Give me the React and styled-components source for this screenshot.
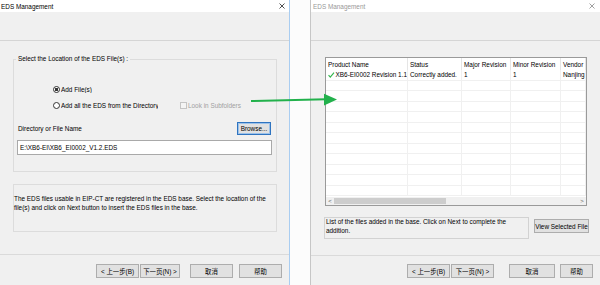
import React from 'react'
import styled, { createGlobalStyle } from 'styled-components'

const GlobalStyle = createGlobalStyle`
  html, body {
    margin: 0;
    padding: 0;
  }
  body {
    width: 600px;
    height: 285px;
    overflow: hidden;
    background: #fff;
    font-family: "Liberation Sans", "Noto Sans CJK SC", Arial, sans-serif;
    font-size: 6.4px;
    color: #000;
  }
`

const Screen = styled.div`
  position: relative;
  display: flex;
  width: 600px;
  height: 285px;
  overflow: hidden;
`

const Window = styled.div`
  display: flex;
  flex-direction: column;
  height: 100%;
  box-sizing: border-box;
  background: #f0f0f0;
  ${props => (props.side === 'left'
    ? 'width: 290px; border-right: 1px solid #a9cdf1;'
    : 'flex: 1; border-left: 1px solid #c6c6c6;')}
`

const Desktop = styled.div`
  width: 20px;
  background: #fcfcfc;
`

const TitleBar = styled.div`
  flex-shrink: 0;
  height: 12px;
  display: flex;
  align-items: center;
  justify-content: space-between;
  padding: 0 ${props => props.pr}px 0 ${props => props.pl}px;
  background: #fff;
  color: ${props => (props.inactive ? '#999' : '#000')};
`

const Header = styled.div`
  flex-shrink: 0;
  height: 29px;
  box-sizing: border-box;
  border-bottom: 1px solid #d5d5d5;
`

const Body = styled.div`
  flex: 1;
  display: flex;
  flex-direction: column;
`

const GroupBox = styled.fieldset`
  margin: 14px 0 0 13px;
  padding: 0;
  width: 264px;
  height: 117px;
  min-width: 0;
  box-sizing: border-box;
  border: 1px solid #dcdcdc;
`

const Legend = styled.legend`
  margin-left: 2px;
  padding: 0 2px;
  line-height: 8px;
`

const Options = styled.div`
  margin-top: 21px;
  padding-left: 39px;
  display: flex;
  flex-direction: column;
  gap: 6px;
`

const OptionRow = styled.div`
  display: flex;
  align-items: center;
  height: 10px;
`

const Radio = styled.span`
  width: 7px;
  height: 7px;
  box-sizing: border-box;
  border-radius: 50%;
  border: 1px solid #333;
  margin-right: 1px;
  background: ${props => (props.checked
    ? 'radial-gradient(circle, #333 0 1.4px, #fff 1.9px)'
    : '#fff')};
`

const OptionLabel = styled.span`
  white-space: nowrap;
  overflow: hidden;
  width: ${props => (props.w ? `${props.w}px` : 'auto')};
`

const Check = styled.span`
  width: 7px;
  height: 7px;
  box-sizing: border-box;
  border: 1px solid #c4c4c4;
  background: #f4f4f4;
  margin: 0 1px 0 22px;
`

const Disabled = styled.span`
  color: #a0a0a0;
  white-space: nowrap;
`

const FileRow = styled.div`
  margin-top: 12px;
  height: 13px;
  display: flex;
  align-items: center;
  justify-content: space-between;
  padding: 0 5px 0 4px;
`

const Button = styled.div`
  width: ${props => props.w}px;
  height: ${props => props.h || 14}px;
  margin-left: ${props => props.ml || 0}px;
  box-sizing: border-box;
  display: flex;
  align-items: center;
  justify-content: center;
  white-space: nowrap;
  background: #e1e1e1;
  border: 1px solid ${props => (props.focused ? '#2f74c0' : '#adadad')};
  box-shadow: ${props => (props.focused ? 'inset 0 0 0 1px #9cc2ea' : 'none')};
`

const SideButton = styled(Button)`
  margin-top: 2px;
`

const TextBox = styled.div`
  margin: 5px 0 0 3px;
  width: 255px;
  height: 15px;
  box-sizing: border-box;
  padding-left: 2px;
  display: flex;
  align-items: center;
  background: #fff;
  border: 1px solid #a9a9a9;
`

const Note = styled.div`
  margin: 12px 0 0 13px;
  width: 264px;
  height: 48px;
  box-sizing: border-box;
  padding: 9px 6px 0 0;
  line-height: 9px;
  border: 1px solid #dcdcdc;
`

const Footer = styled.div`
  margin-top: auto;
  height: ${props => props.h}px;
  box-sizing: border-box;
  border-top: 1px solid #dadada;
  display: flex;
  justify-content: flex-end;
  align-items: flex-start;
  padding: ${props => props.h - 22}px 7px 0 0;
`

const Table = styled.div`
  margin: 16px 0 0 14px;
  width: 262px;
  height: 149px;
  box-sizing: border-box;
  border: 1px solid #9a9a9a;
  background: #fff;
  display: flex;
  flex-direction: column;
  overflow: hidden;
`

const Row = styled.div`
  display: grid;
  grid-template-columns: 82px 54px 49px 50px 1fr;
  height: ${props => (props.head ? 12 : 10.5)}px;
  box-sizing: border-box;
  border-bottom: ${props => (props.head ? 'none' : '1px solid #f0f0f0')};
  flex-shrink: 0;
`

const Cell = styled.div`
  display: flex;
  align-items: center;
  gap: 1px;
  padding-left: 2px;
  white-space: nowrap;
  overflow: hidden;
  border-right: 1px solid ${props => (props.head ? '#e5e5e5' : '#f0f0f0')};
`

const Rows = styled.div`
  flex: 1;
  overflow: hidden;
`

const ScrollBar = styled.div`
  flex-shrink: 0;
  height: 8px;
  display: flex;
  align-items: center;
  background: #f0f0f0;
  color: #606060;
  font-size: 6px;
`

const ScrollArrow = styled.span`
  width: 8px;
  text-align: center;
  line-height: 8px;
`

const Thumb = styled.span`
  width: 112px;
  height: 6px;
  background: #cdcdcd;
`

const Track = styled.span`
  flex: 1;
`

const BottomRow = styled.div`
  margin: 11px 0 0 13px;
  display: flex;
  align-items: flex-start;
`

const InfoBox = styled.div`
  width: 205px;
  height: 22px;
  box-sizing: border-box;
  padding: 0 10px 0 1px;
  line-height: 8.5px;
  border: 1px solid #d2d2d2;
`

const Arrow = styled.svg`
  position: absolute;
  left: 0;
  top: 0;
  pointer-events: none;
`

const CloseIcon = ({ color }) => (
  <svg width="6" height="6" viewBox="0 0 6 6">
    <path d="M0.5 0.5 L5.5 5.5 M5.5 0.5 L0.5 5.5" stroke={color} strokeWidth="0.8" fill="none" />
  </svg>
)

const CheckIcon = () => (
  <svg width="7" height="6" viewBox="0 0 7 6">
    <path d="M0.6 3.2 L2.4 5.2 L6.4 0.6" stroke="#2fb54a" strokeWidth="1.2" fill="none" />
  </svg>
)

const columns = ['Product Name', 'Status', 'Major Revision', 'Minor Revision', 'Vendor']
const emptyRows = Array.from({ length: 11 })

const WizardButtons = ({ widths, gaps }) => (
  <>
    <Button w={widths[0]}>{'< 上一步(B)'}</Button>
    <Button w={widths[1]} ml={gaps[0]}>{'下一页(N) >'}</Button>
    <Button w={widths[2]} ml={gaps[1]}>取消</Button>
    <Button w={widths[3]} ml={gaps[2]}>帮助</Button>
  </>
)

export default function App () {
  return (
    <Screen>
      <GlobalStyle />

      <Window side="left">
        <TitleBar pl={1} pr={4}>
          <span>EDS Management</span>
          <CloseIcon color="#222" />
        </TitleBar>
        <Header />
        <Body>
          <GroupBox>
            <Legend>Select the Location of the EDS File(s) :</Legend>
            <Options>
              <OptionRow>
                <Radio checked />
                <OptionLabel>Add File(s)</OptionLabel>
              </OptionRow>
              <OptionRow>
                <Radio />
                <OptionLabel w={97}>Add all the EDS from the Directory</OptionLabel>
                <Check />
                <Disabled>Look in Subfolders</Disabled>
              </OptionRow>
            </Options>
            <FileRow>
              <span>Directory or File Name</span>
              <Button w={34} h={13} focused>Browse...</Button>
            </FileRow>
            <TextBox>E:\XB6-EI\XB6_EI0002_V1.2.EDS</TextBox>
          </GroupBox>
          <Note>
            The EDS files usable in EIP-CT are registered in the EDS base. Select the location of the
            file(s) and click on Next button to insert the EDS files in the base.
          </Note>
          <Footer h={31}>
            <WizardButtons widths={[43, 40, 43, 43]} gaps={[1, 10, 6]} />
          </Footer>
        </Body>
      </Window>

      <Desktop />

      <Window side="right">
        <TitleBar pl={2} pr={5} inactive>
          <span>EDS Management</span>
          <CloseIcon color="#888" />
        </TitleBar>
        <Header />
        <Body>
          <Table>
            <Row head>
              {columns.map(c => <Cell head key={c}>{c}</Cell>)}
            </Row>
            <Rows>
              <Row>
                <Cell><CheckIcon />XB6-EI0002 Revision 1.1</Cell>
                <Cell>Correctly added.</Cell>
                <Cell>1</Cell>
                <Cell>1</Cell>
                <Cell>Nanjing</Cell>
              </Row>
              {emptyRows.map((_, i) => (
                <Row key={i}>
                  {columns.map(c => <Cell key={c} />)}
                </Row>
              ))}
            </Rows>
            <ScrollBar>
              <ScrollArrow>&lt;</ScrollArrow>
              <Thumb />
              <Track />
              <ScrollArrow>&gt;</ScrollArrow>
            </ScrollBar>
          </Table>
          <BottomRow>
            <InfoBox>List of the files added in the base. Click on Next to complete the addition.</InfoBox>
            <SideButton w={55} ml={5}>View Selected File</SideButton>
          </BottomRow>
          <Footer h={30}>
            <WizardButtons widths={[43, 43, 46, 33]} gaps={[1, 15, 5]} />
          </Footer>
        </Body>
      </Window>

      <Arrow width="600" height="285" viewBox="0 0 600 285">
        <path d="M251 101 L326 99.3" stroke="#22b14c" strokeWidth="2" fill="none" />
        <path d="M324 93.8 L337 99.4 L324 105.4 Z" fill="#22b14c" />
      </Arrow>
    </Screen>
  )
}
